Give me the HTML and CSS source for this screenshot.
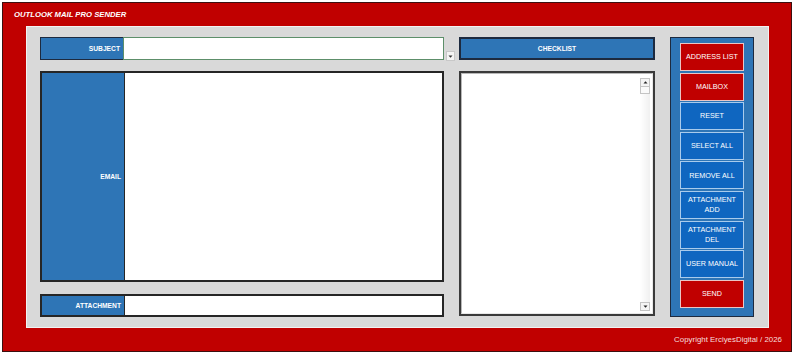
FILE: index.html
```html
<!DOCTYPE html>
<html>
<head>
<meta charset="utf-8">
<link rel="stylesheet" href="styles.css">
</head>
<body>
<div class="frame">
  <div class="title">OUTLOOK MAIL PRO SENDER</div>
  <div class="panel">
    <div class="leftcol">
      <div class="row subject">
        <div class="label">SUBJECT</div>
        <div class="input green"></div>
        <div class="ddarrow"><svg width="7" height="7" viewBox="0 0 7 7"><path d="M1.5 2.5 L5.5 2.5 L3.5 4.8 Z" fill="#333"/></svg></div>
      </div>
      <div class="row email">
        <div class="label">EMAIL</div>
        <div class="input"></div>
      </div>
      <div class="row attach">
        <div class="label">ATTACHMENT</div>
        <div class="input"></div>
      </div>
    </div>
    <div class="checkcol">
      <div class="checkhead">CHECKLIST</div>
      <div class="listbox">
        <div class="listinner">
          <div class="scroll">
            <div class="sbtn"><svg width="7" height="7" viewBox="0 0 7 7"><path d="M1.5 4.5 L5.5 4.5 L3.5 2.2 Z" fill="#222"/></svg></div>
            <div class="sthumb"></div>
            <div class="strack"></div>
            <div class="sbtn"><svg width="7" height="7" viewBox="0 0 7 7"><path d="M1.5 2.5 L5.5 2.5 L3.5 4.8 Z" fill="#222"/></svg></div>
          </div>
        </div>
      </div>
    </div>
    <div class="btnpanel">
      <div class="btn red">ADDRESS LIST</div>
      <div class="btn red">MAILBOX</div>
      <div class="btn blue">RESET</div>
      <div class="btn blue">SELECT ALL</div>
      <div class="btn blue">REMOVE ALL</div>
      <div class="btn blue">ATTACHMENT<br>ADD</div>
      <div class="btn blue">ATTACHMENT<br>DEL</div>
      <div class="btn blue">USER MANUAL</div>
      <div class="btn red">SEND</div>
    </div>
  </div>
  <div class="footer">Copyright ErciyesDigital / 2026</div>
</div>
</body>
</html>
```
FILE: styles.css
```css
* { box-sizing: border-box; }
html, body { margin: 0; padding: 0; background: #ffffff; }
body { width: 794px; height: 354px; overflow: hidden; font-family: "Liberation Sans", Arial, sans-serif; }
.frame {
  margin: 2px 0 0 2px;
  width: 790px;
  height: 350px;
  background: #C00000;
  border: 1px solid #3b1010;
  display: flex;
  flex-direction: column;
  padding: 0 22px 0 23px;
}
.title {
  height: 23px;
  color: #ffffff;
  font-weight: bold;
  font-style: italic;
  font-size: 7.7px;
  line-height: 23px;
  padding-left: 11px;
  margin-left: -23px;
}
.panel {
  height: 302px;
  background: #D9D9D9;
  border: 1px solid #f2f2f2;
  display: flex;
  padding: 10px 13px 10px 13px;
  gap: 15px;
}
.leftcol { width: 404px; display: flex; flex-direction: column; }
.row { display: flex; }
.label {
  width: 83px;
  background: #2E75B6;
  color: #ffffff;
  font-weight: bold;
  font-size: 6.7px;
  display: flex;
  align-items: center;
  justify-content: flex-end;
  padding-right: 3px;
}
.input { flex: 1; background: #ffffff; }
.subject { height: 23px; }
.subject .label { border: 1px solid #1d2a3f; border-right: none; }
.input.green { border: 1px solid #5d8f6a; }
.ddarrow {
  width: 9px;
  height: 10px;
  align-self: flex-end;
  margin-right: -11px;
  margin-left: 2px;
  margin-bottom: -1px;
  background: #f4f4f4;
  border: 1px solid #c8c8c8;
  display: flex;
  align-items: center;
  justify-content: center;
}
.email { height: 211px; margin-top: 11px; border: 2px solid #262626; }
.email .label { border-right: 1px solid #262626; }
.email .input { border: none; }
.attach { height: 23px; margin-top: 12px; border: 2px solid #262626; }
.attach .label { border-right: 1px solid #262626; }
.checkcol { width: 196px; display: flex; flex-direction: column; }
.checkhead {
  height: 23px;
  background: #2E75B6;
  border: 2px solid #1d2a3f;
  color: #ffffff;
  font-weight: bold;
  font-size: 6.7px;
  display: flex;
  align-items: center;
  justify-content: center;
}
.listbox {
  margin-top: 11px;
  height: 245px;
  border: 2px solid #3a3a3a;
  background: #ffffff;
}
.listinner {
  height: 100%;
  border: 1px solid #b8b8b8;
  border-right-color: #e8e8e8;
  border-bottom-color: #e8e8e8;
  display: flex;
  justify-content: flex-end;
  padding: 4px 2px 2px 0;
}
.scroll {
  width: 10px;
  display: flex;
  flex-direction: column;
  background: linear-gradient(to right, #ffffff, #f0f0f0);
}
.sbtn {
  height: 9px;
  background: #f4f4f4;
  border: 1px solid #c4c4c4;
  display: flex;
  align-items: center;
  justify-content: center;
}
.sthumb { height: 7px; border: 1px solid #c4c4c4; border-top: none; background: #fafafa; }
.strack { flex: 1; }
.btnpanel {
  width: 84px;
  height: 280px;
  background: #2E75B6;
  border: 1px solid #1d2a3f;
  display: flex;
  flex-direction: column;
  gap: 1.6px;
  padding: 5px 0 0 9px;
}
.btn {
  width: 64px;
  height: 28px;
  color: #ffffff;
  font-size: 7.2px;
  line-height: 9.5px;
  text-align: center;
  display: flex;
  align-items: center;
  justify-content: center;
  border: 1px solid #d6e4f2;
}
.btn.red { background: #C00000; border-color: #e9c6c6; }
.btn.blue { background: #0F66C0; border-color: #a9cbec; }
.footer {
  height: 23px;
  color: #f6dede;
  font-size: 7.9px;
  display: flex;
  align-items: center;
  justify-content: flex-end;
  padding-right: 9px;
  margin-right: -22px;
}
```
